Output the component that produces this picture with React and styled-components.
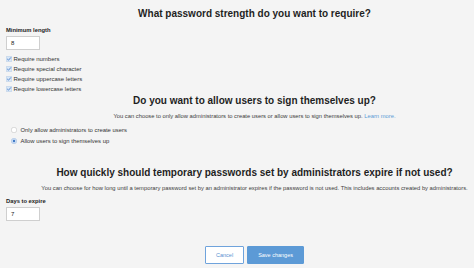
import React from "react";
import styled, { createGlobalStyle } from "styled-components";

const Global = createGlobalStyle`
  html, body {
    margin: 0;
    padding: 0;
    background: #f4f4f4;
    overflow: hidden;
  }
  body {
    font-family: "Liberation Sans", Arial, sans-serif;
    color: #222;
  }
  #root { width: 474px; }
`;

const Page = styled.div`
  width: 474px;
  height: 268px;
  box-sizing: border-box;
  padding: 8px 6px 0 6px;
  background: #f4f4f4;
  border-top: 2px solid #f9f9f9;
  margin-top: -2px;
`;

const Centered = styled.div`
  padding-left: 29px;
  margin-right: -6px;
  text-align: center;
  white-space: nowrap;
  margin-top: ${(p) => p.$top || 0}px;
`;

const Heading = styled.h2`
  margin: 0;
  font-size: 10px;
  line-height: 12px;
  font-weight: 700;
  color: #1f1f1f;
`;

const Subtext = styled.p`
  margin: 0;
  font-size: 5.8px;
  line-height: 7px;
  color: #3c3c3c;
`;

const Link = styled.a`
  color: #5b9bd5;
  text-decoration: none;
`;

const Field = styled.div`
  display: flex;
  flex-direction: column;
  align-items: flex-start;
  margin-top: ${(p) => p.$top || 0}px;
`;

const Label = styled.label`
  font-size: 5.8px;
  line-height: 7px;
  font-weight: 700;
  color: #222;
`;

const TextBox = styled.div`
  margin-top: 1.5px;
  width: 34px;
  height: 14px;
  box-sizing: border-box;
  background: #fff;
  border: 1px solid #cfcfcf;
  padding-left: 4px;
  display: flex;
  align-items: center;
  font-size: 6px;
  color: #222;
`;

const OptionList = styled.div`
  display: flex;
  flex-direction: column;
  margin-top: ${(p) => p.$top || 0}px;
  padding-left: ${(p) => p.$indent || 0}px;
`;

const OptionRow = styled.div`
  display: flex;
  align-items: center;
  height: ${(p) => p.$h}px;
  gap: ${(p) => p.$gap}px;
  font-size: ${(p) => p.$size}px;
  color: #333;
`;

const Buttons = styled.div`
  display: flex;
  justify-content: center;
  gap: 3px;
`;

const Button = styled.button`
  height: 18px;
  padding: 0 10px;
  box-sizing: border-box;
  font-family: "Liberation Sans", Arial, sans-serif;
  font-size: 5.5px;
  border-radius: 1px;
  cursor: pointer;
  border: 1px solid ${(p) => (p.$primary ? "#5c9ad6" : "#6fa3dc")};
  background: ${(p) => (p.$primary ? "#5c9ad6" : "#ffffff")};
  color: ${(p) => (p.$primary ? "#ffffff" : "#5a8fcf")};
`;

const CheckIcon = () => (
  <svg width="6" height="6" viewBox="0 0 12 12">
    <rect x="0.5" y="0.5" width="11" height="11" rx="2" fill="#d9e7f7" stroke="#a9c2df" />
    <path d="M2.8 6.2 L5 8.4 L9.4 3.4" fill="none" stroke="#3f78c6" strokeWidth="1.6" strokeLinecap="round" strokeLinejoin="round" />
  </svg>
);

const RadioIcon = ({ checked }) => (
  <svg width="6" height="6" viewBox="0 0 12 12">
    <circle cx="6" cy="6" r="5.5" fill={checked ? "#cfe0f5" : "#ffffff"} stroke={checked ? "#9dbbe0" : "#b9b9b9"} />
    {checked && <circle cx="6" cy="6" r="2.4" fill="#3f78c6" />}
  </svg>
);

const checks = [
  "Require numbers",
  "Require special character",
  "Require uppercase letters",
  "Require lowercase letters",
];

const radios = [
  { label: "Only allow administrators to create users", checked: false },
  { label: "Allow users to sign themselves up", checked: true },
];

export default function App() {
  return (
    <>
      <Global />
      <Page>
        <Centered>
          <Heading>What password strength do you want to require?</Heading>
        </Centered>
        <Field $top={7}>
          <Label>Minimum length</Label>
          <TextBox>8</TextBox>
        </Field>
        <OptionList $top={4.5}>
          {checks.map((c) => (
            <OptionRow key={c} $h={10} $gap={1.5} $size={6}>
              <CheckIcon />
              <span>{c}</span>
            </OptionRow>
          ))}
        </OptionList>

        <Centered $top={1}>
          <Heading>Do you want to allow users to sign themselves up?</Heading>
        </Centered>
        <Centered $top={6}>
          <Subtext>
            You can choose to only allow administrators to create users or allow users to sign themselves up.{" "}
            <Link>Learn more.</Link>
          </Subtext>
        </Centered>
        <OptionList $top={4} $indent={5}>
          {radios.map((r) => (
            <OptionRow key={r.label} $h={11} $gap={3.5} $size={5.9}>
              <RadioIcon checked={r.checked} />
              <span>{r.label}</span>
            </OptionRow>
          ))}
        </OptionList>

        <Centered $top={21}>
          <Heading>How quickly should temporary passwords set by administrators expire if not used?</Heading>
        </Centered>
        <Centered $top={6}>
          <Subtext>
            You can choose for how long until a temporary password set by an administrator expires if the password is not used. This includes accounts created by administrators.
          </Subtext>
        </Centered>
        <Field $top={6}>
          <Label>Days to expire</Label>
          <TextBox>7</TextBox>
        </Field>

        <Centered $top={25.5}>
          <Buttons>
            <Button>Cancel</Button>
            <Button $primary>Save changes</Button>
          </Buttons>
        </Centered>
      </Page>
    </>
  );
}
